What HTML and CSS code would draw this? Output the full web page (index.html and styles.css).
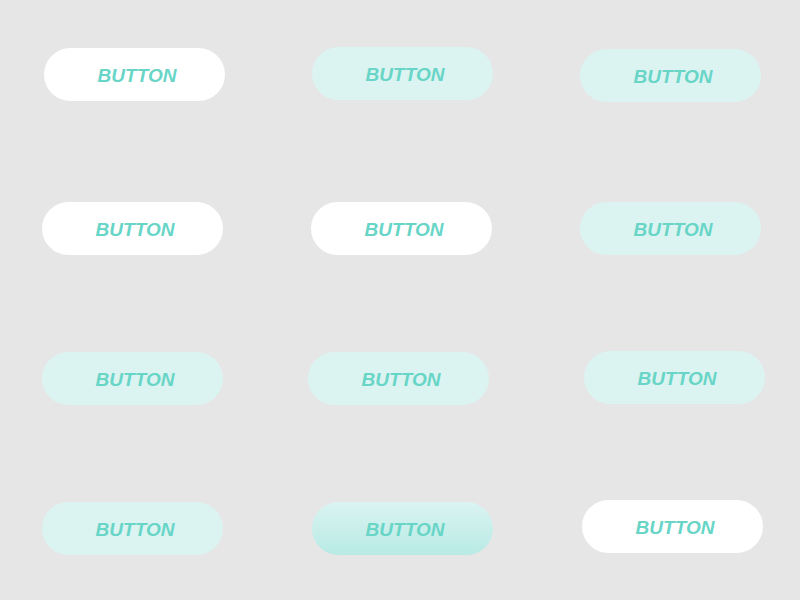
FILE: index.html
```html
<!DOCTYPE html>
<html lang="en">
<head>
    <meta charset="UTF-8">
    <title>button states</title>
    <link rel="stylesheet" href="styles.css">
</head>
<body>
    <div class="btn-board">
        <!-- row 1 -->
        <div class="cell"><a href="#" class="btn btn-white nudge-r2">BUTTON</a></div>
        <div class="cell"><a href="#" class="btn btn-mint nudge-r1 nudge-u1">BUTTON</a></div>
        <div class="cell"><a href="#" class="btn btn-mint nudge-d1">BUTTON</a></div>
        <!-- row 2 -->
        <div class="cell"><a href="#" class="btn btn-white">BUTTON</a></div>
        <div class="cell"><a href="#" class="btn btn-white">BUTTON</a></div>
        <div class="cell"><a href="#" class="btn btn-mint">BUTTON</a></div>
        <!-- row 3 -->
        <div class="cell"><a href="#" class="btn btn-mint">BUTTON</a></div>
        <div class="cell"><a href="#" class="btn btn-mint nudge-l3">BUTTON</a></div>
        <div class="cell"><a href="#" class="btn btn-mint nudge-r3 nudge-u1">BUTTON</a></div>
        <!-- row 4 -->
        <div class="cell"><a href="#" class="btn btn-mint">BUTTON</a></div>
        <div class="cell"><a href="#" class="btn btn-press nudge-r1">BUTTON</a></div>
        <div class="cell"><a href="#" class="btn btn-white nudge-r2 nudge-u2">BUTTON</a></div>
    </div>
</body>
</html>
```

FILE: styles.css
```css
html, body{
    margin: 0; padding: 0;
    background-color: #e6e6e6;
}

.btn-board{
    display: grid;
    grid-template-columns: repeat(3, 181px);
    grid-template-rows: 154px 150px 150px 53px;
    column-gap: 88px;
    padding: 48px 0 0 42px;
}

.cell{ display: block; }

.btn{
    display: flex;
    align-items: center;
    justify-content: center;
    box-sizing: border-box;
    width: 181px;
    height: 53px;
    padding: 3px 0 0 5px;
    border-radius: 27px;
    font-family: "Liberation Sans", Arial, sans-serif;
    font-size: 19px;
    font-weight: bold;
    font-style: italic;
    color: #68d5c7;
    text-decoration: none;
}

.btn-white{ background-color: #fff; }
.btn-mint{ background-color: #dbf4f1; }
.btn-press{ background: linear-gradient(to bottom, #daf4f2 0%, #c9efeb 50%, #b8eae4 100%); }

/* small state shifts */
.nudge-r1{ margin-left: 1px; }
.nudge-r2{ margin-left: 2px; }
.nudge-r3{ margin-left: 4px; }
.nudge-l3{ margin-left: -3px; }
.nudge-u1{ margin-top: -1px; }
.nudge-u2{ margin-top: -2px; }
.nudge-d1{ margin-top: 1px; }
```
